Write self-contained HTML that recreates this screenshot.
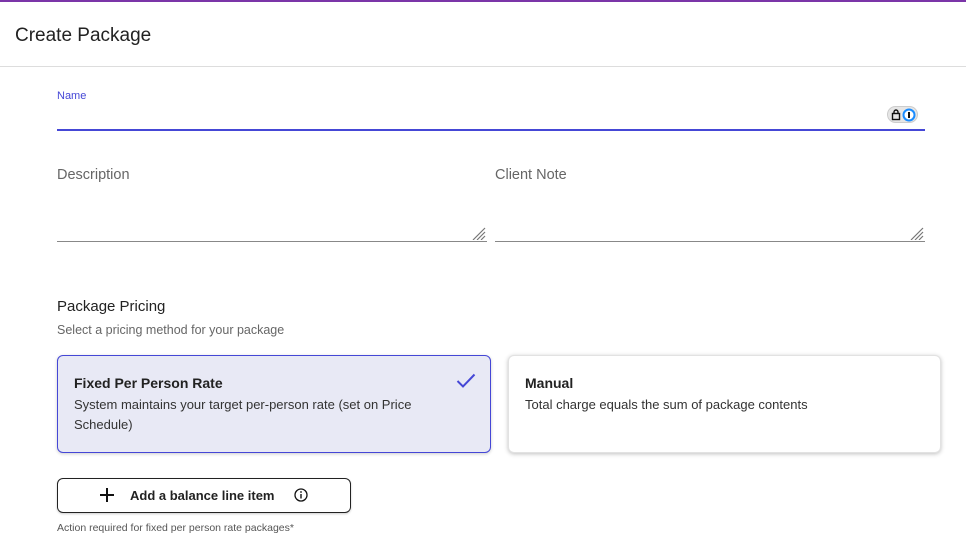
<!DOCTYPE html>
<html><head><style>
*{box-sizing:border-box;margin:0;padding:0}
body{width:966px;height:557px;background:#fff;font-family:"Liberation Sans",sans-serif;color:#222;position:relative;overflow:hidden}
.top{position:absolute;left:0;top:0;width:966px;height:2px;background:#7b35a8}
.title{position:absolute;left:15px;top:25px;font-size:19px;color:#222}
.hr{position:absolute;left:0;top:66px;width:966px;height:1px;background:#ddd}
.abs{position:absolute}
.lbl{font-size:11px;color:#4547d6}
.ph{font-size:14.5px;color:#666}
.card{position:absolute;top:355px;height:98px;border-radius:6px}
.ct{font-size:14px;font-weight:bold;color:#222}
.cd{font-size:13px;color:#333;line-height:20px;margin-top:4px}
</style></head><body>
<div class="top"></div>
<div class="title">Create Package</div>
<div class="hr"></div>
<div class="abs lbl" style="left:57px;top:90px">Name</div>
<div class="abs" style="left:57px;top:129px;width:868px;height:2px;background:#4547d6"></div>
<div class="abs" style="left:887px;top:106px;width:31px;height:17px;border-radius:9px;background:#e6e6e6;border:1px solid #ccc"></div>
<svg class="abs" style="left:891px;top:108px" width="26" height="14" viewBox="0 0 26 14"><rect x="1.5" y="5.5" width="7" height="6" fill="none" stroke="#111" stroke-width="1.4"/><path d="M3 5.5V4a2 2 0 0 1 4 0v1.5" fill="none" stroke="#111" stroke-width="1.4"/><circle cx="18" cy="7" r="5.5" fill="#fff" stroke="#1a8cff" stroke-width="2"/><rect x="17" y="4" width="2" height="6" fill="#111"/></svg>
<div class="abs ph" style="left:57px;top:167px">Description</div>
<div class="abs" style="left:57px;top:241px;width:430px;height:1px;background:#888"></div>
<div class="abs ph" style="left:495px;top:167px">Client Note</div>
<div class="abs" style="left:495px;top:241px;width:430px;height:1px;background:#888"></div>
<svg class="abs" style="left:472px;top:227px" width="14" height="13"><path d="M13 1L1 13M13 5L5 13M13 9L9 13" stroke="#777" stroke-width="1.2"/></svg>
<svg class="abs" style="left:910px;top:227px" width="14" height="13"><path d="M13 1L1 13M13 5L5 13M13 9L9 13" stroke="#777" stroke-width="1.2"/></svg>
<div class="abs" style="left:57px;top:298px;font-size:15px;color:#222">Package Pricing</div>
<div class="abs" style="left:57px;top:323px;font-size:12.5px;color:#666">Select a pricing method for your package</div>
<div class="card" style="left:57px;width:434px;background:#e8e9f5;border:1px solid #4547d6;box-shadow:0 1px 3px rgba(0,0,0,.2);padding:19px 16px">
<div class="ct">Fixed Per Person Rate</div><div class="cd" style="width:370px">System maintains your target per-person rate (set on Price Schedule)</div></div>
<svg class="abs" style="left:456px;top:373px" width="20" height="15"><path d="M1.5 8L7 13.5L18.5 1.5" fill="none" stroke="#4547d6" stroke-width="2"/></svg>
<div class="card" style="left:508px;width:433px;background:#fff;border:1px solid #e2e2e2;box-shadow:0 1px 4px rgba(0,0,0,.25);padding:19px 16px">
<div class="ct">Manual</div><div class="cd">Total charge equals the sum of package contents</div></div>
<div class="abs" style="left:57px;top:478px;width:294px;height:35px;border:1px solid #222;border-radius:6px;box-shadow:0 1px 2px rgba(0,0,0,.2)"></div>
<svg class="abs" style="left:99px;top:487px" width="16" height="16"><path d="M8 1V15M1 8H15" stroke="#111" stroke-width="2"/></svg>
<div class="abs" style="left:130px;top:488px;font-size:13px;font-weight:bold;color:#222">Add a balance line item</div>
<svg class="abs" style="left:294px;top:488px" width="14" height="14"><circle cx="7" cy="7" r="6" fill="none" stroke="#111" stroke-width="1.3"/><path d="M7 6V10.5" stroke="#111" stroke-width="1.4"/><circle cx="7" cy="4" r=".9" fill="#111"/></svg>
<div class="abs" style="left:57px;top:522px;font-size:10.5px;color:#555">Action required for fixed per person rate packages*</div>
</body></html>
